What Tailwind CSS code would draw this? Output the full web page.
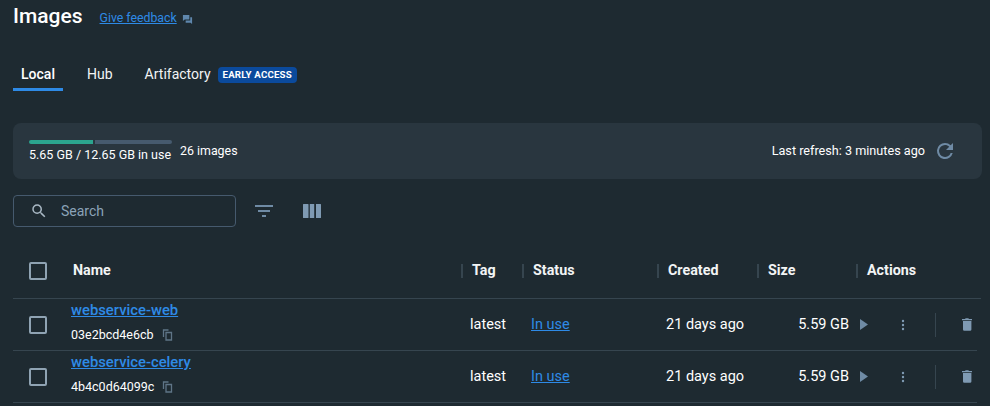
<!DOCTYPE html>
<html>
<head>
<meta charset="utf-8">
<script src="https://cdn.jsdelivr.net/npm/@tailwindcss/browser@4"></script>
</head>
<body class="w-[990px] h-[406px] overflow-hidden bg-[#1e2a31] text-white font-['Roboto',sans-serif]">
<div class="pl-[13px] pr-[9px]">
  <div class="flex items-start h-[60px]">
    <h1 class="text-[21px] leading-[32px] font-medium">Images</h1>
    <a class="ml-[17px] mt-[9px] text-[12.3px] leading-[18px] text-[#2e8ae6] underline">Give feedback</a>
    <svg class="ml-[5px] mt-[14px]" width="11" height="11" viewBox="0 0 12 12" fill="#5f87ad"><path d="M1 1h7v5H3L1 7.500z"/><path d="M9 3.500h2V11L9.300 9.500H4V7h5z"/></svg>
  </div>
  <div class="flex items-start h-[31px]">
    <div class="w-[50px] h-[31px] border-b-[3px] border-[#2e8ae6] text-center text-[14px] leading-[28px] font-medium">Local</div>
    <div class="ml-[24px] text-[14px] leading-[28px] text-[#f2f4f5]">Hub</div>
    <div class="ml-[32px] text-[14px] leading-[28px] text-[#f2f4f5]">Artifactory</div>
    <span class="ml-[7px] mt-[7px] h-[16px] px-[5px] rounded-[4px] bg-[#0b4a9c] text-[9.700px] leading-[16px] font-bold tracking-[0.2px]">EARLY ACCESS</span>
  </div>
  <div class="mt-[32px] mr-[-1px] h-[56px] rounded-[8px] bg-[#29363f] flex items-center pl-[16px] pr-[25px]">
    <div class="w-[143px]">
      <div class="flex gap-[2px] h-[4px]">
        <div class="w-[64px] rounded-l-[2px] bg-[#2ba58f]"></div>
        <div class="w-[77px] rounded-r-[2px] bg-[#465a6e]"></div>
      </div>
      <div class="mt-[3px] text-[12.500px] leading-[16px] whitespace-nowrap">5.65 GB / 12.65 GB in use</div>
    </div>
    <div class="ml-[8px] mt-[-1px] text-[12.400px] leading-[16px]">26 images</div>
    <div class="ml-auto text-[12.650px] leading-[16px]">Last refresh: 3 minutes ago</div>
    <svg class="ml-[8px]" width="24" height="24" viewBox="0 0 24 24" fill="#6f8ba5"><path d="M17.650 6.350A7.960 7.960 0 0 0 12 4a8 8 0 1 0 7.730 10h-2.080A6 6 0 1 1 12 6c1.660 0 3.140.690 4.220 1.780L13 11h7V4z"/></svg>
  </div>
  <div class="mt-[16px] flex items-center h-[32px]">
    <div class="w-[223px] h-[32px] rounded-[4px] border border-[#465a6e] flex items-center pl-[16px]">
      <svg width="18" height="18" viewBox="0 0 24 24" fill="#a9b8c4"><path d="M15.500 14h-.790l-.280-.270A6.470 6.470 0 0 0 16 9.500 6.500 6.500 0 1 0 9.500 16c1.610 0 3.090-.590 4.230-1.570l.270.280v.790l5 4.990L20.490 19zm-6 0C7.010 14 5 11.990 5 9.500S7.010 5 9.500 5 14 7.010 14 9.500 11.990 14 9.500 14"/></svg>
      <span class="ml-[13px] text-[14px] text-[#8ba3b8]">Search</span>
    </div>
    <svg class="ml-[16px]" width="24" height="24" viewBox="0 0 24 24" fill="#6f8ba5"><path d="M10 18h4v-2h-4zM3 6v2h18V6zm3 7h12v-2H6z"/></svg>
    <svg class="ml-[24px] mr-[-1px]" width="24" height="24" viewBox="0 0 24 24" fill="#7f9ab3"><path d="M3.500 5h4.500a.5 .5 0 0 1 .5.5v13a.5 .5 0 0 1-.5.5H3.500a.5 .5 0 0 1-.5-.5v-13a.5 .5 0 0 1 .5-.5zM9.800 5h4.400v14H9.800zM16 5h4.500a.5 .5 0 0 1 .5.5v13a.5 .5 0 0 1-.5.5H16z"/></svg>
  </div>

  <div class="mt-[23px] h-[49px] pb-[7px] flex items-center border-b border-[#36454f] text-[14.300px] font-bold text-[#f2f4f5]">
    <div class="w-[60px] pl-[16px]"><div class="w-[18px] h-[18px] rounded-[2px] border-2 border-[#8fa3b3]"></div></div>
    <div class="w-[388px]">Name</div>
    <div class="w-[61px] flex items-center"><i class="w-[2px] h-[14px] bg-[#36454f] mr-[9px]"></i>Tag</div>
    <div class="w-[135px] flex items-center"><i class="w-[2px] h-[14px] bg-[#36454f] mr-[9px]"></i>Status</div>
    <div class="w-[100px] flex items-center"><i class="w-[2px] h-[14px] bg-[#36454f] mr-[9px]"></i>Created</div>
    <div class="w-[99px] flex items-center"><i class="w-[2px] h-[14px] bg-[#36454f] mr-[9px]"></i>Size</div>
    <div class="flex items-center"><i class="w-[2px] h-[14px] bg-[#36454f] mr-[9px]"></i>Actions</div>
  </div>

  <div class="mr-[4px] h-[52px] flex items-center border-b border-[#36454f] text-[14.500px] text-white">
    <div class="w-[58px] pl-[16px]"><div class="w-[18px] h-[18px] rounded-[2px] border-2 border-[#8fa3b3]"></div></div>
    <div class="w-[399px] mb-[6px]">
      <a class="block text-[14.800px] leading-[20px] font-medium text-[#2e8ae6] underline">webservice-web</a>
      <div class="mt-[7px] flex items-center text-[12.500px] leading-[16px]">03e2bcd4e6cb
        <svg class="ml-[8px]" width="12" height="12" viewBox="0 0 12 12" fill="none" stroke="#5f7587" stroke-width="1.300"><path d="M4 3.500h5.500v7.500H4z"/><path d="M1.500 8V1h5"/></svg>
      </div>
    </div>
    <div class="w-[61px]">latest</div>
    <div class="w-[135px]"><a class="text-[#2e8ae6] underline">In use</a></div>
    <div class="w-[78px] whitespace-nowrap">21 days ago</div>
    <div class="w-[105px] text-right">5.59 GB</div>
    <svg class="ml-[11px]" width="8" height="11" viewBox="0 0 8 11" fill="#6f8ba5"><path d="M0 0v11l8-5.500z"/></svg>
    <svg class="ml-[33px]" width="4" height="12" viewBox="0 0 4 12" fill="#7f9ab3"><circle cx="2" cy="2" r="1.200"/><circle cx="2" cy="6" r="1.200"/><circle cx="2" cy="10" r="1.200"/></svg>
    <i class="ml-[30px] w-px h-[24px] bg-[#36454f]"></i>
    <svg class="ml-[26px]" width="10" height="13" viewBox="0 0 10 13" fill="#7f9ab3"><path d="M1 3h8.400v8.500a1.300 1.300 0 0 1-1.300 1.300H2.300A1.300 1.300 0 0 1 1 11.500zM0 1h3l.7-.8h2.600L7 1h3v1.200H0z"/></svg>
  </div>

  <div class="mr-[4px] h-[52px] flex items-center border-b border-[#36454f] text-[14.500px] text-white">
    <div class="w-[58px] pl-[16px]"><div class="w-[18px] h-[18px] rounded-[2px] border-2 border-[#8fa3b3]"></div></div>
    <div class="w-[399px] mb-[6px]">
      <a class="block text-[14.800px] leading-[20px] font-medium text-[#2e8ae6] underline">webservice-celery</a>
      <div class="mt-[7px] flex items-center text-[12.500px] leading-[16px]">4b4c0d64099c
        <svg class="ml-[8px]" width="12" height="12" viewBox="0 0 12 12" fill="none" stroke="#5f7587" stroke-width="1.300"><path d="M4 3.500h5.500v7.500H4z"/><path d="M1.500 8V1h5"/></svg>
      </div>
    </div>
    <div class="w-[61px]">latest</div>
    <div class="w-[135px]"><a class="text-[#2e8ae6] underline">In use</a></div>
    <div class="w-[78px] whitespace-nowrap">21 days ago</div>
    <div class="w-[105px] text-right">5.59 GB</div>
    <svg class="ml-[11px]" width="8" height="11" viewBox="0 0 8 11" fill="#6f8ba5"><path d="M0 0v11l8-5.500z"/></svg>
    <svg class="ml-[33px]" width="4" height="12" viewBox="0 0 4 12" fill="#7f9ab3"><circle cx="2" cy="2" r="1.200"/><circle cx="2" cy="6" r="1.200"/><circle cx="2" cy="10" r="1.200"/></svg>
    <i class="ml-[30px] w-px h-[24px] bg-[#36454f]"></i>
    <svg class="ml-[26px]" width="10" height="13" viewBox="0 0 10 13" fill="#7f9ab3"><path d="M1 3h8.400v8.500a1.300 1.300 0 0 1-1.300 1.300H2.300A1.300 1.300 0 0 1 1 11.500zM0 1h3l.7-.8h2.600L7 1h3v1.200H0z"/></svg>
  </div>
</div>
</body>
</html>
